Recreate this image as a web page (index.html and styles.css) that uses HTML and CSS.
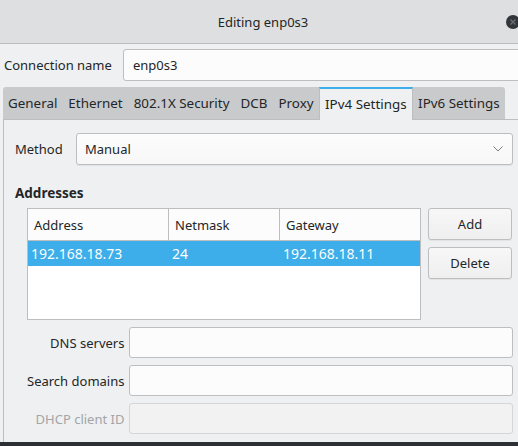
FILE: index.html
```html
<!DOCTYPE html>
<html lang="en">

<head>
    <meta charset="UTF-8">
    <meta name="viewport" content="width=device-width, initial-scale=1.0">
    <title>Editing enp0s3</title>
    <link rel="stylesheet" href="styles.css">
</head>

<body>
    <div class="window">
        <div class="titlebar">
            <span></span>
            <span class="title">Editing enp0s3</span>
            <button class="close" title="Close">
                <svg width="14" height="14" viewBox="0 0 14 14">
                    <circle cx="7" cy="7" r="7" fill="#31363b"/>
                    <path d="M4.5 4.5 L9.5 9.5 M9.5 4.5 L4.5 9.5" stroke="#6d7174" stroke-width="1.2"/>
                </svg>
            </button>
        </div>

        <div class="conn-row">
            <label class="conn-label">Connection name</label>
            <div class="field conn-field">enp0s3</div>
        </div>

        <div class="tabs">
            <div class="tabbar">
                <div class="tab first">General</div>
                <div class="tab">Ethernet</div>
                <div class="tab">802.1X Security</div>
                <div class="tab">DCB</div>
                <div class="tab">Proxy</div>
                <div class="tab active">IPv4 Settings</div>
                <div class="tab last">IPv6 Settings</div>
            </div>

            <div class="panel">
                <div class="method-row">
                    <span class="method-label">Method</span>
                    <div class="combo">
                        <span>Manual</span>
                        <svg width="10" height="6" viewBox="0 0 10 6">
                            <path d="M0.5 0.5 L5 5 L9.5 0.5" fill="none" stroke="#7b7e80" stroke-width="1"/>
                        </svg>
                    </div>
                </div>

                <h3 class="section">Addresses</h3>

                <div class="addresses">
                    <div class="table">
                        <div class="thead">
                            <div class="th">Address</div>
                            <div class="th sep">Netmask</div>
                            <div class="th sep">Gateway</div>
                        </div>
                        <div class="tr selected">
                            <div class="td">192.168.18.73</div>
                            <div class="td">24</div>
                            <div class="td">192.168.18.11</div>
                        </div>
                    </div>
                    <div class="side-buttons">
                        <button class="btn">Add</button>
                        <button class="btn">Delete</button>
                    </div>
                </div>

                <div class="form">
                    <label class="form-label">DNS servers</label>
                    <div class="field"></div>
                    <label class="form-label">Search domains</label>
                    <div class="field"></div>
                    <label class="form-label disabled">DHCP client ID</label>
                    <div class="field disabled"></div>
                </div>

                <div class="check-row">
                    <span class="checkbox"></span>
                </div>
            </div>
        </div>
    </div>
    <div class="taskbar"></div>
</body>

</html>
```

FILE: styles.css
```css
:root {
    --window-bg: #eff0f1;
    --titlebar-bg: #dedfe1;
    --text: #232627;
    --text-disabled: #a3a5a7;
    --border: #bcbebf;
    --tab-bg: #c9cacc;
    --accent: #3daee9;
    --field-bg: #fcfcfc;
    --radius: 3px;
}

html,
body {
    margin: 0;
    padding: 0;
    overflow: hidden;
    background: var(--window-bg);
}

body {
    font-family: "Noto Sans", "DejaVu Sans", sans-serif;
    font-size: 13px;
    color: var(--text);
    width: 518px;
    height: 446px;
}

.window {
    width: 526px;
    height: 442px;
    overflow: hidden;
    background: var(--window-bg);
}

.titlebar {
    height: 43px;
    display: grid;
    grid-template-columns: 1fr auto 1fr;
    align-items: center;
    background: var(--titlebar-bg);
    border-bottom: 1px solid #bdbec0;
}

.title {
    line-height: 17px;
    padding-top: 1px;
}

.close {
    justify-self: end;
    margin-right: 6px;
    padding: 0;
    border: none;
    background: none;
    width: 14px;
    height: 14px;
    display: flex;
}

.conn-row {
    display: flex;
    align-items: center;
    margin: 5px 0 0 4px;
}

.conn-label {
    width: 119px;
    flex-shrink: 0;
}

.field {
    height: 31px;
    box-sizing: border-box;
    background: var(--field-bg);
    border: 1px solid var(--border);
    border-radius: var(--radius);
    display: flex;
    align-items: center;
    padding: 0 9px;
}

.conn-field {
    flex: 1;
    height: 32px;
}

.field.disabled {
    background: #f2f2f2;
    border-color: #d5d6d7;
}

/* tab widget */
.tabs {
    margin: 6px 1px 0 3px;
}

.tabbar {
    display: flex;
    height: 32px;
    font-size: 13.4px;
}

.tab {
    background: var(--tab-bg);
    padding: 0 5.5px;
    line-height: 32px;
    white-space: nowrap;
    box-sizing: border-box;
    height: 32px;
}

.tab.first {
    padding-left: 5px;
    border-top-left-radius: var(--radius);
}

.tab.last {
    border-top-right-radius: var(--radius);
}

.tab.active {
    position: relative;
    z-index: 1;
    height: 33px;
    background: var(--window-bg);
    border-top: 2px solid var(--accent);
    border-left: 1px solid var(--border);
    border-right: 1px solid var(--border);
    padding: 0 5px;
    line-height: 30px;
}

.panel {
    border: 1px solid var(--border);
    border-bottom: none;
    padding: 13px 11px 0 11px;
    height: 400px;
}

.method-row {
    display: flex;
    align-items: center;
}

.method-label {
    width: 61px;
    flex-shrink: 0;
}

.combo {
    flex: 1;
    height: 32px;
    box-sizing: border-box;
    display: flex;
    align-items: center;
    justify-content: space-between;
    padding: 0 9px 0 8px;
    background: linear-gradient(#fcfcfc, #f7f7f7);
    border: 1px solid var(--border);
    border-radius: var(--radius);
    box-shadow: 0 1px 1px rgba(0, 0, 0, 0.06);
}

.section {
    margin: 20px 0 0 0;
    font-size: 13.5px;
    font-weight: bold;
    line-height: 17px;
}

.addresses {
    display: flex;
    gap: 7px;
    margin: 6px 0 0 12px;
}

.table {
    width: 394px;
    height: 112px;
    box-sizing: border-box;
    border: 1px solid var(--border);
    background: #ffffff;
}

.thead,
.tr {
    display: grid;
    grid-template-columns: 140px 111px 1fr;
}

.thead {
    height: 32px;
    box-sizing: border-box;
    border-bottom: 1px solid var(--border);
    background: var(--field-bg);
}

.th {
    padding: 1px 0 0 6px;
    line-height: 30px;
}

.th.sep {
    border-left: 1px solid var(--border);
}

.tr {
    height: 25px;
    line-height: 25px;
    font-size: 14px;
}

.tr.selected {
    background: var(--accent);
    color: #fcfcfc;
}

.td {
    padding: 1px 0 0 3px;
    line-height: 24px;
}

.td + .td {
    padding-left: 4px;
}

.side-buttons {
    width: 84px;
    display: flex;
    flex-direction: column;
    gap: 7px;
}

.btn {
    height: 32px;
    font: inherit;
    color: var(--text);
    background: linear-gradient(#f7f7f7, #efefef);
    border: 1px solid var(--border);
    border-radius: var(--radius);
    box-shadow: 0 1px 1px rgba(0, 0, 0, 0.06);
    padding: 0;
}

.form {
    display: grid;
    grid-template-columns: auto 1fr;
    column-gap: 5px;
    row-gap: 7px;
    align-items: center;
    margin: 7px 0 0 12px;
}

.form-label {
    text-align: right;
    white-space: nowrap;
}

.form-label.disabled {
    color: var(--text-disabled);
}

.check-row {
    margin: 8px 0 0 17px;
}

.checkbox {
    display: block;
    width: 14px;
    height: 14px;
    border: 1px solid #c4c5c6;
    border-radius: 2px;
    background: #e6e7e8;
}

.taskbar {
    height: 4px;
    background: #2c3034;
}
```
